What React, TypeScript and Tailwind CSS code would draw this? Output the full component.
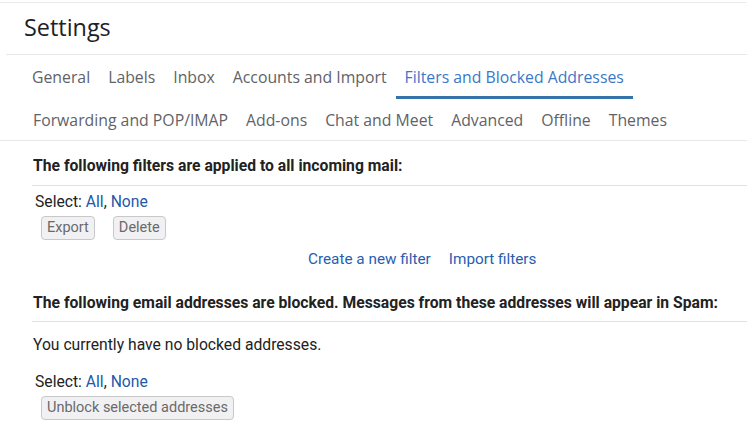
const rowOne = ["General", "Labels", "Inbox", "Accounts and Import", "Filters and Blocked Addresses"];
const rowTwo = ["Forwarding and POP/IMAP", "Add-ons", "Chat and Meet", "Advanced", "Offline", "Themes"];
const active = "Filters and Blocked Addresses";

function Tab({ label }: { label: string }) {
  const on = label === active;
  return (
    <div
      className={
        "flex h-full items-center px-[9px] pt-[2px] " +
        (on ? "border-b-[3px] border-[#3574a8] pt-[5px] text-[#3a78c9]" : "text-[#5f6368]")
      }
    >
      {label}
    </div>
  );
}

function SelectLine() {
  return (
    <div className="pl-[3px] text-[#222]">
      Select: <a className="text-[#2259a8]">All</a>, <a className="text-[#2259a8]">None</a>
    </div>
  );
}

function Btn({ children }: { children: React.ReactNode }) {
  return (
    <button className="h-[24px] rounded-[4px] border border-[#c8c8c8] bg-[#f1f1f3] px-[5px] text-[14.5px] leading-none text-[#6a6a6a]">
      {children}
    </button>
  );
}

export default function App() {
  return (
    <div className="h-[433px] w-[747px] overflow-hidden bg-white font-['Roboto',sans-serif] text-[15.7px]">
      <div className="mt-[2px] border-t border-[#ececec]" />
      <div className="ml-[6px] flex h-[52px] items-center border-b border-[#e8e8e8] pl-[18px] pb-[2px]">
        <h1 className="font-['Open_Sans',sans-serif] text-[23.4px] text-[#202124]">Settings</h1>
      </div>

      <div className="font-['Open_Sans',sans-serif] text-[15.8px]">
        <div className="flex h-[44px] items-center pl-[23px]">
          {rowOne.map((t) => (
            <Tab key={t} label={t} />
          ))}
        </div>
        <div className="flex h-[42px] items-center border-b border-[#e8e8e8] pl-[24px]">
          {rowTwo.map((t) => (
            <Tab key={t} label={t} />
          ))}
        </div>
      </div>

      <div className="pl-[32px]">
        <div className="flex h-[45px] items-center border-b border-[#e2e2e2] pl-[1px] pt-[6px] font-bold text-[#222]">
          The following filters are applied to all incoming mail:
        </div>
        <div className="mt-[7px] leading-[18px]">
          <SelectLine />
        </div>
        <div className="mt-[5px] flex gap-[18px] pl-[9px]">
          <Btn>Export</Btn>
          <Btn>Delete</Btn>
        </div>
        <div className="mt-[10px] flex gap-[18px] pl-[276px] text-[15.3px] leading-[18px] text-[#2a5db0]">
          <a>Create a new filter</a>
          <a>Import filters</a>
        </div>

        <div className="mt-[10px] flex h-[44px] items-center border-b border-[#e2e2e2] pl-[1px] pt-[6px] font-bold text-[#222]">
          The following email addresses are blocked. Messages from these addresses will appear in Spam:
        </div>
        <div className="mt-[14px] pl-[1px] leading-[18px] text-[#222]">You currently have no blocked addresses.</div>
        <div className="mt-[19px] leading-[18px]">
          <SelectLine />
        </div>
        <div className="mt-[4px] pl-[9px]">
          <Btn>Unblock selected addresses</Btn>
        </div>
      </div>
    </div>
  );
}
